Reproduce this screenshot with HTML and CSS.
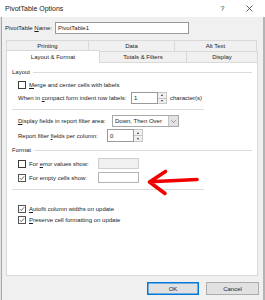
FILE: index.html
```html
<!DOCTYPE html>
<html>
<head>
<meta charset="utf-8">
<link rel="stylesheet" href="styles.css">
</head>
<body>
<div class="dialog">
  <div class="titlebar">
    <span class="title">PivotTable Options</span>
    <span class="ctl">?</span>
    <span class="ctl"><svg width="7" height="7" viewBox="0 0 7 7"><path d="M0.5 0.5L6.5 6.5M6.5 0.5L0.5 6.5" stroke="#333" stroke-width="0.8" fill="none"/></svg></span>
  </div>
  <div class="body">
    <div class="name-row">
      <span class="name-label">PivotTable <u>N</u>ame:</span>
      <div class="field name-field">PivotTable1</div>
    </div>
    <div class="tabs">
      <div class="tab-row">
        <div class="tab t-print">Printing</div>
        <div class="tab t-data">Data</div>
        <div class="tab t-alt">Alt Text</div>
      </div>
      <div class="tab-row">
        <div class="tab active t-layout">Layout &amp; Format</div>
        <div class="tab t-totals">Totals &amp; Filters</div>
        <div class="tab t-display">Display</div>
      </div>
    </div>
    <div class="panel">
      <div class="group-head"><span>Layout</span></div>
      <div class="row r-check r-merge">
        <span class="cb"></span>
        <span class="cb-text"><u>M</u>erge and center cells with labels</span>
      </div>
      <div class="row r-input r-compact">
        <span class="lbl lbl-compact">When in <u>c</u>ompact form indent row labels:</span>
        <div class="field num">1</div>
        <div class="spin"><span class="up"></span><span class="down"></span></div>
        <span class="suffix">character(s)</span>
      </div>
      <div class="sep"></div>
      <div class="row r-input r-display">
        <span class="lbl lbl-display"><u>D</u>isplay fields in report filter area:</span>
        <div class="select">
          <span class="select-text">Down, Then Over</span>
          <span class="select-btn"><svg width="5" height="3" viewBox="0 0 5 3"><path d="M0.3 0.3L2.5 2.5L4.7 0.3" stroke="#777" stroke-width="0.7" fill="none"/></svg></span>
        </div>
      </div>
      <div class="row r-input r-report">
        <span class="lbl lbl-report">Report filter <u>f</u>ields per column:</span>
        <div class="field num">0</div>
        <div class="spin"><span class="up"></span><span class="down"></span></div>
      </div>
      <div class="group-head g-format"><span>Format</span></div>
      <div class="row r-fmt r-error">
        <span class="fmt-lbl"><span class="cb"></span><span class="cb-text">For <u>e</u>rror values show:</span></span>
        <div class="field fmt-field disabled"></div>
      </div>
      <div class="row r-fmt r-empty">
        <span class="fmt-lbl"><span class="cb checked"><svg width="6" height="6" viewBox="0 0 6 6"><path d="M0.8 3.1L2.3 4.6L5.2 1.2" stroke="#333" stroke-width="0.7" fill="none"/></svg></span><span class="cb-text">For empty cells show:</span></span>
        <div class="field fmt-field"></div>
      </div>
      <div class="sep sep-2"></div>
      <div class="row r-check r-autofit">
        <span class="cb checked"><svg width="6" height="6" viewBox="0 0 6 6"><path d="M0.8 3.1L2.3 4.6L5.2 1.2" stroke="#333" stroke-width="0.7" fill="none"/></svg></span>
        <span class="cb-text"><u>A</u>utofit column widths on update</span>
      </div>
      <div class="row r-check r-preserve">
        <span class="cb checked"><svg width="6" height="6" viewBox="0 0 6 6"><path d="M0.8 3.1L2.3 4.6L5.2 1.2" stroke="#333" stroke-width="0.7" fill="none"/></svg></span>
        <span class="cb-text"><u>P</u>reserve cell formatting on update</span>
      </div>
    </div>
    <div class="buttons">
      <div class="btn btn-ok">OK</div>
      <div class="btn btn-cancel">Cancel</div>
    </div>
  </div>
  <svg class="arrow" width="265" height="300" viewBox="0 0 265 300">
    <path d="M197 179.5L150 181.8M165.5 171.5L149.5 182L165 193.5" stroke="#f20000" stroke-width="3.6" stroke-linecap="round" stroke-linejoin="round" fill="none"/>
  </svg>
</div>
</body>
</html>
```

FILE: styles.css
```css
* { box-sizing: border-box; }
html, body { margin: 0; padding: 0; }
body {
  width: 265px;
  height: 300px;
  overflow: hidden;
  font-family: "Liberation Sans", Arial, sans-serif;
  font-size: 6px;
  color: #1b1b1b;
}
u { text-underline-offset: 1px; text-decoration-thickness: 0.5px; }

.dialog {
  position: relative;
  width: 265px;
  height: 300px;
  background: #f0f0f0;
  display: flex;
  flex-direction: column;
  box-shadow: inset 1px 0 0 #e2e2e2, inset 2px 0 0 #a8a8a8, inset -2px 0 0 #b4b4b4;
}

.titlebar {
  flex: none;
  height: 17px;
  background: #fff;
  display: flex;
  align-items: center;
  padding: 0 2px 0 5px;
}
.title { flex: 1; font-size: 7px; color: #222; }
.ctl {
  width: 27px;
  height: 17px;
  display: flex;
  align-items: center;
  justify-content: center;
  font-size: 7px;
  color: #333;
}

.body {
  flex: 1;
  display: flex;
  flex-direction: column;
  padding: 5px 7px 0 5px;
}

.name-row { display: flex; align-items: center; height: 12px; }
.name-label { width: 50px; }
.field {
  background: #fff;
  border: 1px solid #9a9a9a;
  display: flex;
  align-items: center;
  padding-left: 2px;
}
.name-field { width: 134px; height: 12px; padding-left: 2px; }

.tabs { margin-top: 6px; margin-left: 1px; display: flex; flex-direction: column; }
.tab-row { display: flex; height: 11px; }
.tab {
  display: flex;
  align-items: center;
  justify-content: center;
  border: 1px solid #d9d9d9;
  border-bottom: none;
  margin-left: -1px;
  background: #f0f0f0;
}
.tab-row .tab:first-child { margin-left: 0; }
.t-print { width: 83px; }
.t-data { width: 87px; }
.t-alt { width: 83px; }
.t-layout { width: 94px; }
.t-totals { width: 88px; }
.t-display { width: 72px; }
.tab.active {
  position: relative;
  z-index: 1;
  background: #fff;
  height: 13px;
  margin: -1px 0 -1px -1px;
  border-color: #d9d9d9;
}

.panel {
  margin-left: 1px;
  width: 252px;
  height: 214px;
  background: #fff;
  border: 1px solid #d9d9d9;
  padding-top: 5px;
  display: flex;
  flex-direction: column;
}

.group-head {
  display: flex;
  align-items: center;
  height: 8px;
  margin: 0 5px;
}
.group-head::after {
  content: "";
  flex: 1;
  height: 1px;
  background: #dcdcdc;
  margin-left: 3px;
}
.g-format { margin-top: 4px; }

.row { display: flex; align-items: center; margin-left: 11px; }
.r-check { height: 8px; }
.r-merge { margin-top: 5px; }
.r-compact { margin-top: 3px; height: 12px; }
.r-display { margin-top: 5px; height: 12px; }
.r-report { margin-top: 2px; height: 13px; }
.r-fmt { height: 11px; }
.r-error { margin-top: 4px; }
.r-empty { margin-top: 3px; }
.r-autofit { margin-top: 15px; }
.r-preserve { margin-top: 3px; }

.cb {
  flex: none;
  width: 8px;
  height: 8px;
  border: 1px solid #3c3c3c;
  background: #fff;
  display: flex;
  align-items: center;
  justify-content: center;
}
.cb.checked { border-color: #555; }
.cb-text { margin-left: 3px; white-space: nowrap; }

.lbl { flex: none; white-space: nowrap; }
.lbl-compact { width: 113px; }
.lbl-display { width: 94px; }
.lbl-report { width: 89px; }

.num { width: 27px; height: 100%; }
.spin {
  width: 9px;
  height: 100%;
  display: flex;
  flex-direction: column;
  border: 1px solid #c6c6c6;
  border-left: none;
  background: #f0f0f0;
}
.spin span {
  flex: 1;
  display: flex;
  align-items: center;
  justify-content: center;
}
.spin .up { border-bottom: 1px solid #c6c6c6; }
.spin .up::before {
  content: "";
  border-left: 1.5px solid transparent;
  border-right: 1.5px solid transparent;
  border-bottom: 2px solid #333;
}
.spin .down::before {
  content: "";
  border-left: 1.5px solid transparent;
  border-right: 1.5px solid transparent;
  border-top: 2px solid #333;
}
.suffix { margin-left: 3px; }

.sep {
  margin: 5px 0 0 5px;
  width: 192px;
  height: 1px;
  flex: none;
  background: #dcdcdc;
}
.sep-2 { margin-top: 6px; }

.select {
  width: 67px;
  height: 100%;
  display: flex;
  border: 1px solid #a8a8a8;
  background: #fff;
}
.select-text { flex: 1; display: flex; align-items: center; padding-left: 2px; }
.select-btn {
  width: 10px;
  display: flex;
  align-items: center;
  justify-content: center;
  background: #e3e3e3;
  border-left: 1px solid #c4c4c4;
}

.fmt-lbl { width: 80px; display: flex; align-items: center; flex: none; }
.fmt-field { width: 41px; height: 100%; border-color: #b4b4b4; }
.fmt-field.disabled { background: #f0f0f0; border-color: #cfcfcf; }

.buttons {
  margin-top: 6px;
  margin-right: -1px;
  display: flex;
  justify-content: flex-end;
  gap: 7px;
}
.btn {
  height: 13px;
  display: flex;
  align-items: center;
  justify-content: center;
  background: #e1e1e1;
  border: 1px solid #adadad;
}
.btn-ok { width: 52px; border-color: #0078d7; box-shadow: inset 0 0 0 0.5px #0078d7; }
.btn-cancel { width: 53px; }

.arrow { position: absolute; left: 0; top: 0; pointer-events: none; }
```
